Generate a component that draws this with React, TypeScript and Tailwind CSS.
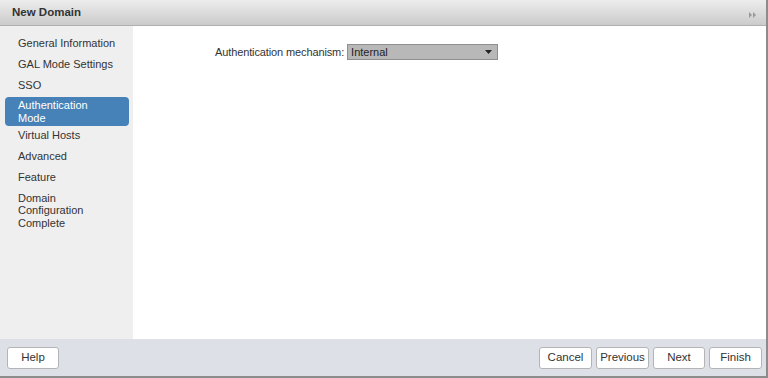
const steps = [
  'General Information',
  'GAL Mode Settings',
  'SSO',
  'Authentication Mode',
  'Virtual Hosts',
  'Advanced',
  'Feature',
  'Domain Configuration Complete',
];

const ACTIVE = 'Authentication Mode';

function FooterButton({ label, className }: { label: string; className?: string }) {
  return (
    <button
      type="button"
      className={`h-[22px] rounded-[3px] border border-[#b4b4b4] bg-white text-[11.5px] text-[#333] ${className ?? ''}`}
    >
      {label}
    </button>
  );
}

export default function App() {
  return (
    <div
      className="flex h-[378px] w-[768px] flex-col overflow-hidden border-r-2 border-b-2 border-[#8c8c8c] bg-white"
      style={{ fontFamily: '"Liberation Sans", Arial, sans-serif' }}
    >
      <div className="flex h-[26px] shrink-0 items-center justify-between border-b border-[#b0b0b0] bg-gradient-to-b from-[#ededed] to-[#cbcbcb] pl-3 pr-2">
        <span className="text-[11.5px] font-bold text-[#333]">New Domain</span>
        <svg width="10" height="8" viewBox="0 0 10 8" className="mt-1">
          <path d="M1 1 L4 4 L1 7 Z" fill="#9a9a9a" />
          <path d="M5 1 L8 4 L5 7 Z" fill="#9a9a9a" />
        </svg>
      </div>

      <div className="flex min-h-0 flex-1">
        <div className="flex w-[133px] shrink-0 flex-col gap-[8px] bg-[#efefef] pl-[5px] pr-[4px] pt-[10.5px]">
          {steps.map((s) =>
            s === ACTIVE ? (
              <div
                key={s}
                className="-mt-[2.5px] -mb-[5.5px] rounded-[4px] bg-[#4682b8] py-[1.5px] pl-[13px] text-[11px] leading-[13px] text-white"
              >
                Authentication
                <br />
                Mode
              </div>
            ) : (
              <div key={s} className="pl-[13px] text-[11px] leading-[13px] text-[#333]">
                {s === 'Domain Configuration Complete' ? (
                  <div className="leading-[12.5px]">
                    Domain
                    <br />
                    Configuration
                    <br />
                    Complete
                  </div>
                ) : (
                  s
                )}
              </div>
            ),
          )}
        </div>

        <div className="flex-1 bg-white pt-[18px] pl-[82px]">
          <div className="flex items-center gap-[3px]">
            <span className="text-[11px] tracking-[-0.12px] text-[#333]">Authentication mechanism:</span>
            <div className="flex h-[16px] w-[151px] items-center justify-between border border-[#8f8f8f] bg-[#b8b8b8] pl-[3px] pr-[5px]">
              <span className="text-[11px] leading-none text-[#222]">Internal</span>
              <svg width="7" height="4" viewBox="0 0 7 4">
                <path d="M0 0 L7 0 L3.5 4 Z" fill="#222" />
              </svg>
            </div>
          </div>
        </div>
      </div>

      <div className="flex h-[37px] shrink-0 items-center justify-between bg-[#dde0e6] pl-[7px] pr-[4px]">
        <FooterButton label="Help" className="w-[52px]" />
        <div className="flex gap-[4px]">
          <FooterButton label="Cancel" className="w-[53px]" />
          <FooterButton label="Previous" className="w-[53px]" />
          <FooterButton label="Next" className="w-[52px]" />
          <FooterButton label="Finish" className="w-[53px]" />
        </div>
      </div>
    </div>
  );
}
